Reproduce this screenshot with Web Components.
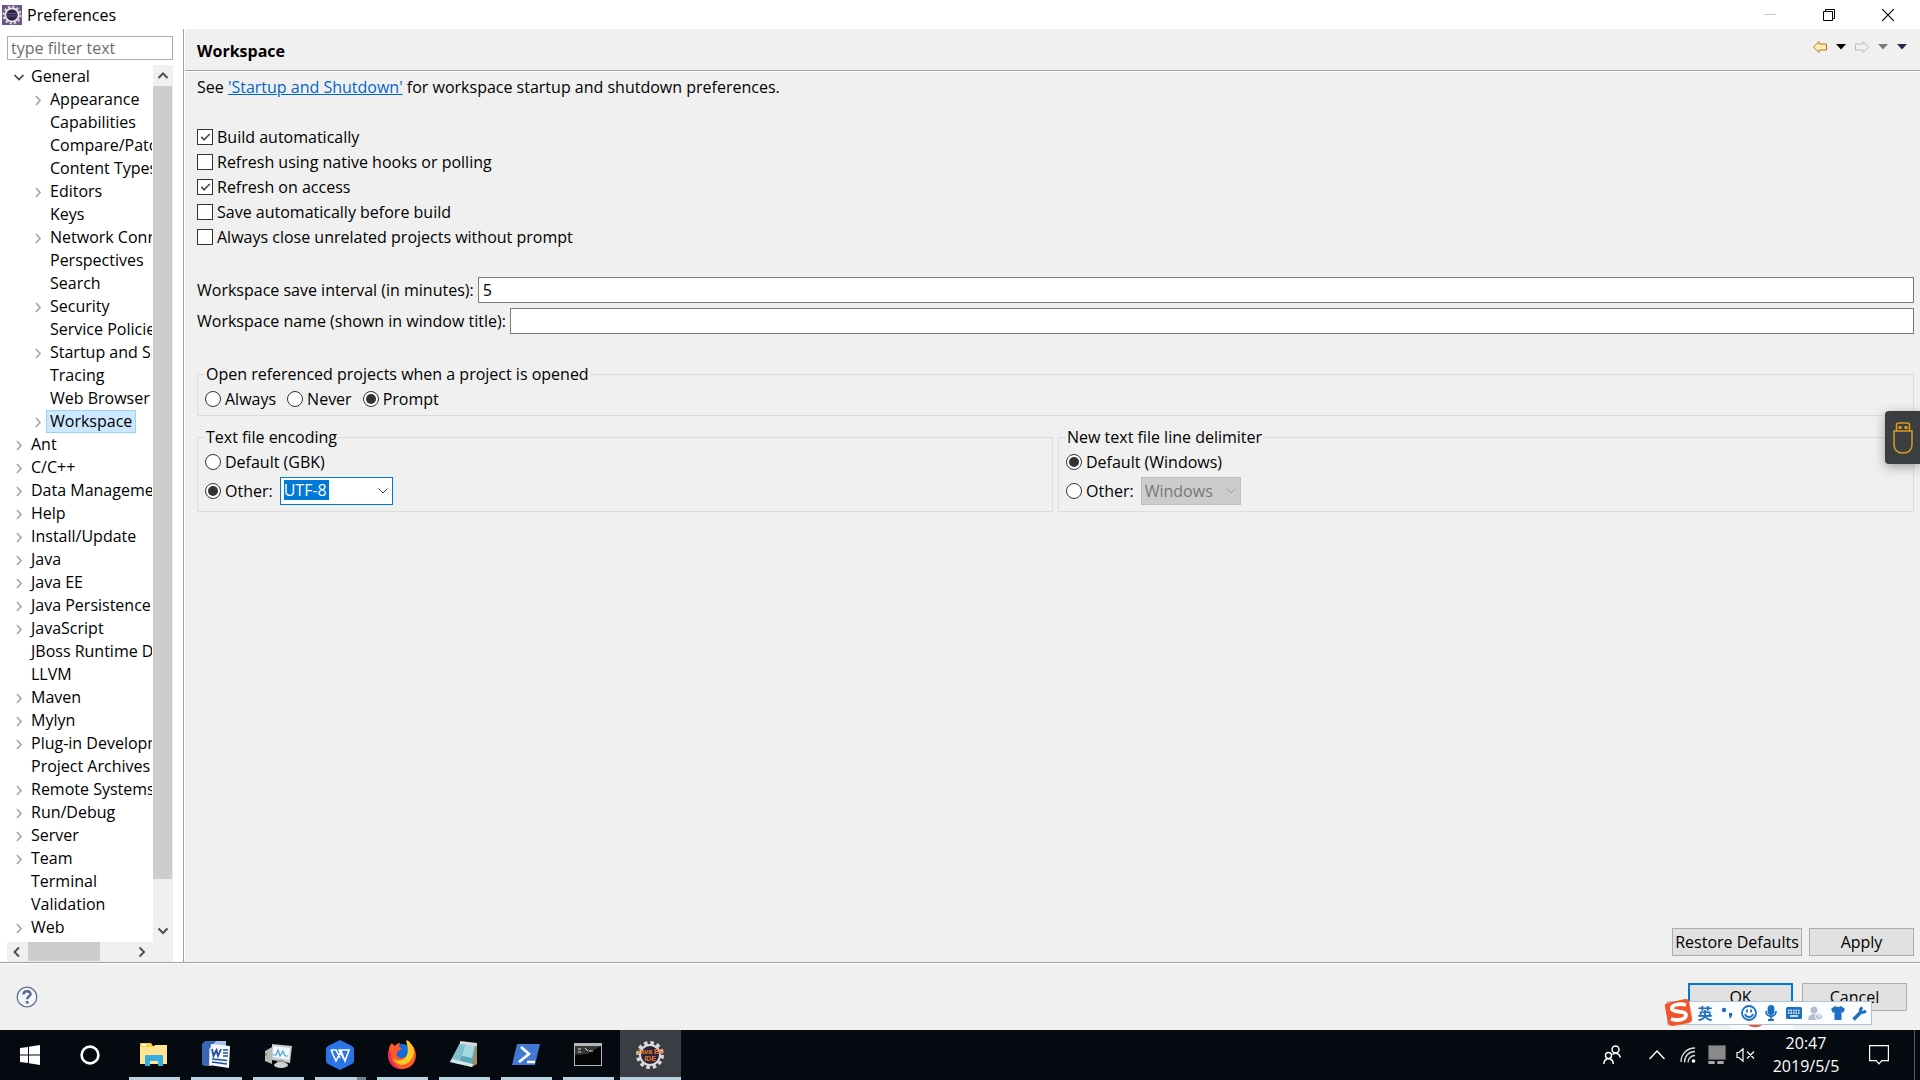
<!DOCTYPE html>
<html lang="en">
<head>
<meta charset="utf-8">
<title>Preferences</title>
<style>
  body {
    margin: 0;
    height: 100vh;
    display: flex;
    flex-direction: column;
    overflow: hidden;
    font-family: "Open Sans", "Noto Sans", "Noto Sans CJK SC", sans-serif;
    font-size: 16px;
    line-height: 20px;
    color: #000;
    background: #f0f0f0;
  }
  main { flex: 1; min-height: 0; display: flex; }
  a { color: #0066cc; }
</style>
</head>
<body>
<title-bar>Preferences</title-bar>
<main>
  <pref-sidebar></pref-sidebar>
  <pref-page heading="Workspace">
    <p>See <a href="#startup">'Startup and Shutdown'</a> for workspace startup and shutdown preferences.</p>
    <pref-stack>
      <pref-option type="checkbox" checked>Build automatically</pref-option>
      <pref-option type="checkbox">Refresh using native hooks or polling</pref-option>
      <pref-option type="checkbox" checked>Refresh on access</pref-option>
      <pref-option type="checkbox">Save automatically before build</pref-option>
      <pref-option type="checkbox">Always close unrelated projects without prompt</pref-option>
    </pref-stack>
    <pref-stack>
      <text-field label="Workspace save interval (in minutes):" value="5"></text-field>
      <text-field label="Workspace name (shown in window title):" value=""></text-field>
    </pref-stack>
    <pref-groups>
      <group-box label="Open referenced projects when a project is opened" wide>
        <option-row>
          <pref-option type="radio">Always</pref-option>
          <pref-option type="radio">Never</pref-option>
          <pref-option type="radio" checked>Prompt</pref-option>
        </option-row>
      </group-box>
      <group-box label="Text file encoding">
        <option-row><pref-option type="radio">Default (GBK)</pref-option></option-row>
        <option-row tall>
          <pref-option type="radio" checked>Other:</pref-option>
          <combo-box label="Text file encoding" value="UTF-8" active></combo-box>
        </option-row>
      </group-box>
      <group-box label="New text file line delimiter">
        <option-row><pref-option type="radio" checked>Default (Windows)</pref-option></option-row>
        <option-row tall>
          <pref-option type="radio">Other:</pref-option>
          <combo-box label="Line delimiter" value="Windows" disabled></combo-box>
        </option-row>
      </group-box>
    </pref-groups>
    <push-button slot="actions" wide>Restore Defaults</push-button>
    <push-button slot="actions">Apply</push-button>
  </pref-page>
</main>
<dialog-footer>
  <push-button primary>OK</push-button>
  <push-button>Cancel</push-button>
</dialog-footer>
<task-bar></task-bar>
<ime-bar></ime-bar>
<usb-tab></usb-tab>

<script>
  function define(name, render, setup) {
    if (customElements.get(name)) return;
    customElements.define(name, class extends HTMLElement {
      constructor() {
        super();
        this.attachShadow({ mode: 'open' });
      }
      connectedCallback() {
        this.shadowRoot.innerHTML = render(this);
        if (setup) setup(this, this.shadowRoot);
      }
    });
  }

  define('title-bar', () => `
    <style>
      :host { display: flex; align-items: center; height: 29px; padding: 0 3px 0 2px; background: #fff; }
      span { flex: 1; padding-left: 5px; }
      button { width: 59px; height: 29px; padding: 0; border: 0; background: none; }
      button svg { display: block; margin: auto; }
    </style>
    <svg width="20" height="20" viewBox="0 0 20 20">
      <rect width="20" height="20" fill="#6d5592"/>
      <circle cx="10" cy="10" r="8.5" fill="none" stroke="#d9d6d2" stroke-width="2" stroke-dasharray="2.4 2.05"/>
      <circle cx="10" cy="10" r="6.7" fill="#2d2548" stroke="#eeece6" stroke-width="1.8"/>
      <path d="M5 8.5h10M4.500 11h11" stroke="#5f5588"/>
    </svg>
    <span><slot></slot></span>
    <button aria-label="Minimize"><svg width="12" height="12" fill="none"><path d="M0 5.5h12" stroke="#c8c8c8"/></svg></button>
    <button aria-label="Restore"><svg width="12" height="12" fill="none" stroke="#000"><path d="M.5 2.500h9v9h-9zM2.500 2.500v-2h9v9h-2"/></svg></button>
    <button aria-label="Close"><svg width="12" height="12" fill="none" stroke="#000" stroke-width="1.200"><path d="M0 0l12 12M12 0L0 12"/></svg></button>
  `);

  // kind: 'x' closed, 'o' open, '-' leaf
  const TREE = [
    ['General', 'o'], ['Appearance', 'x', 1], ['Capabilities', '-', 1], ['Compare/Patch', '-', 1],
    ['Content Types', '-', 1], ['Editors', 'x', 1], ['Keys', '-', 1], ['Network Connections', 'x', 1],
    ['Perspectives', '-', 1], ['Search', '-', 1], ['Security', 'x', 1], ['Service Policies', '-', 1],
    ['Startup and Shutdown', 'x', 1], ['Tracing', '-', 1], ['Web Browser', '-', 1], ['Workspace', 'x', 1],
    ['Ant', 'x'], ['C/C++', 'x'], ['Data Management', 'x'], ['Help', 'x'], ['Install/Update', 'x'],
    ['Java', 'x'], ['Java EE', 'x'], ['Java Persistence', 'x'], ['JavaScript', 'x'],
    ['JBoss Runtime Detection', '-'], ['LLVM', '-'], ['Maven', 'x'], ['Mylyn', 'x'],
    ['Plug-in Development', 'x'], ['Project Archives', '-'], ['Remote Systems', 'x'], ['Run/Debug', 'x'],
    ['Server', 'x'], ['Team', 'x'], ['Terminal', '-'], ['Validation', '-'], ['Web', 'x']
  ];

  define('pref-sidebar', () => `
    <style>
      :host { display: flex; flex-direction: column; width: 183px; background: #fff; border-right: 1px solid #a0a0a0; }
      input { box-sizing: border-box; height: 24px; margin: 7px 10px 5px 7px; padding: 0 3px; border: 1px solid #abadb3; border-radius: 0; font: inherit; }
      input::placeholder { color: #6d6d6d; opacity: 1; }
      .tree { flex: 1; min-height: 0; display: grid; grid-template: minmax(0, 1fr) 20px / minmax(0, 1fr) 20px; margin: 0 10px 0 7px; }
      .items { overflow: hidden; margin-right: 1px; }
      .corner { background: #f0f0f0; }
    </style>
    <input type="text" placeholder="type filter text" aria-label="Filter">
    <div class="tree">
      <div class="items" role="tree">
        ${TREE.map(([text, kind, depth]) =>
          `<tree-item kind="${kind}" ${depth ? 'nested' : ''} ${text === 'Workspace' ? 'selected' : ''}>${text}</tree-item>`).join('')}
      </div>
      <scroll-bar></scroll-bar>
      <scroll-bar horizontal></scroll-bar>
      <div class="corner"></div>
    </div>
  `);

  define('tree-item', el => `
    <style>
      :host { display: flex; align-items: center; height: 23px; padding-left: 5px; white-space: nowrap; }
      :host([nested]) { padding-left: 24px; }
      svg { flex: none; width: 14px; height: 12px; margin-right: 1px; }
      span { box-sizing: border-box; height: 23px; padding: 0 3px; border: 1px solid transparent; line-height: 20px; }
      :host([selected]) span { background: #cce8ff; border-color: #99d1ff; }
    </style>
    <svg viewBox="0 0 14 12" fill="none">${{
      x: '<path d="M5 2l4 4.500L5 11" stroke="#a6a6a6" stroke-width="1.700"/>',
      o: '<path d="M2.500 4l4.500 4.500L11.500 4" stroke="#404040" stroke-width="1.700"/>',
      '-': ''
    }[el.getAttribute('kind')]}</svg>
    <span><slot></slot></span>
  `);

  define('scroll-bar', el => {
    const across = el.hasAttribute('horizontal');
    const arrow = d => `<svg width="12" height="12" viewBox="0 0 12 12" fill="none" stroke="#505050" stroke-width="2"><path d="${d}"/></svg>`;
    return `
      <style>
        :host { display: flex; flex-direction: column; background: #f0f0f0; }
        :host([horizontal]) { flex-direction: row; }
        button { flex: none; width: 19px; height: 21px; padding: 0; border: 0; background: none; }
        :host([horizontal]) button { width: 21px; height: 19px; }
        svg { display: block; margin: auto; }
        .track { flex: 1; display: flex; flex-direction: inherit; }
        .thumb { background: #cdcdcd; width: 19px; height: 95%; }
        :host([horizontal]) .thumb { width: 69%; height: 19px; }
      </style>
      <button aria-label="Back">${arrow(across ? 'M7 1.500L2.500 6 7 10.500' : 'M1.500 8L6 3.500 10.500 8')}</button>
      <div class="track"><div class="thumb"></div></div>
      <button aria-label="Forward">${arrow(across ? 'M2.500 1.500L7 6l-4.500 4.500' : 'M1.500 2.500L6 7l4.500-4.500')}</button>
    `;
  });

  define('pref-page', el => `
    <style>
      :host { flex: 1; min-width: 0; display: flex; flex-direction: column; border-left: 1px solid #fff; }
      header { display: flex; align-items: center; height: 41px; padding: 0 12px; border-bottom: 1px solid #a0a0a0; box-shadow: 0 1px #fff; }
      h1 { flex: 1; margin: 0; padding-top: 2px; font-size: 16px; line-height: 20px; font-weight: 700; }
      nav { align-self: flex-start; display: flex; align-items: center; gap: 8px; height: 36px; }
      nav button { display: block; padding: 0; border: 0; background: none; }
      nav svg { display: block; }
      section { flex: 1; padding: 6px 6px 0 12px; }
      footer { display: flex; justify-content: flex-end; gap: 7px; padding: 0 6px 6px; }
      ::slotted(p) { margin: 0 0 30px; }
    </style>
    <header>
      <h1>${el.getAttribute('heading')}</h1>
      <nav>
        <button aria-label="Back"><svg width="16" height="14" viewBox="0 0 16 14"><path d="M1.500 7L7 1.500V4h7.500v6H7v2.500z" fill="#fdedb0" stroke="#b87a1c" stroke-linejoin="round"/></svg></button>
        <button aria-label="Back history"><svg width="10" height="6"><path d="M0 0h10L5 5.500z" fill="#000"/></svg></button>
        <button aria-label="Forward"><svg width="16" height="14" viewBox="0 0 16 14"><path d="M14.500 7L9 1.500V4H1.500v6H9v2.500z" fill="#f0f0ec" stroke="#bcbcbc" stroke-linejoin="round"/></svg></button>
        <button aria-label="Forward history"><svg width="10" height="6"><path d="M0 0h10L5 5.500z" fill="#7c7c80"/></svg></button>
        <button aria-label="View menu"><svg width="12" height="6"><path d="M1 0h10L6 5.500z" fill="#2b2450"/></svg></button>
      </nav>
    </header>
    <section><slot></slot></section>
    <footer><slot name="actions"></slot></footer>
  `);

  define('pref-stack', () => `
    <style>:host { display: flex; flex-direction: column; gap: 5px; margin-bottom: 30px; }</style>
    <slot></slot>
  `);

  define('pref-option', el => `
    <style>
      :host { display: block; }
      label { display: flex; align-items: center; gap: 4px; width: fit-content; height: 20px; white-space: nowrap; }
      input { appearance: none; flex: none; box-sizing: border-box; display: grid; place-items: center; width: 16px; height: 16px; margin: 0; border: 1px solid #333; background: #fff; }
      input[type=radio] { border-radius: 50%; }
      input[type=radio]:checked::after { content: ""; width: 10px; height: 10px; border-radius: 50%; background: #333; }
      input[type=checkbox]:checked::after { content: ""; width: 9px; height: 4px; margin-bottom: 3px; border: solid #444; border-width: 0 0 2px 2px; transform: rotate(-45deg) scale(.8); }
    </style>
    <label><input type="${el.getAttribute('type')}" ${el.hasAttribute('checked') ? 'checked' : ''}><slot></slot></label>
  `);

  define('text-field', el => `
    <style>
      :host { display: flex; align-items: center; gap: 4px; }
      input { flex: 1; min-width: 0; box-sizing: border-box; height: 26px; padding: 0 4px; border: 1px solid #7a7a7a; font: inherit; }
    </style>
    <label for="field">${el.getAttribute('label')}</label>
    <input id="field" type="text" value="${el.getAttribute('value')}">
  `);

  define('pref-groups', () => `
    <style>:host { display: grid; grid-template-columns: 1fr 1fr; gap: 11px 5px; }</style>
    <slot></slot>
  `);

  define('group-box', el => `
    <style>
      :host { display: block; min-width: 0; }
      :host([wide]) { grid-column: 1 / -1; }
      fieldset { margin: 0; padding: 5px 7px 6px; border: 1px solid #dcdcdc; min-width: 0; }
      legend { padding: 0 1px; line-height: 20px; }
    </style>
    <fieldset><legend>${el.getAttribute('label')}</legend><slot></slot></fieldset>
  `, el => {
    // radios live in separate shadow roots, so the box keeps them exclusive
    const radios = [...el.querySelectorAll('pref-option')];
    el.addEventListener('click', e => {
      const hit = e.target.closest('pref-option');
      if (hit) radios.forEach(r => { r.shadowRoot.querySelector('input').checked = r === hit; });
    });
  });

  define('option-row', () => `
    <style>
      :host { display: flex; align-items: center; gap: 11px; }
      :host([tall]) { gap: 7px; margin-top: 5px; }
    </style>
    <slot></slot>
  `);

  define('combo-box', el => `
    <style>
      :host { display: grid; align-items: center; }
      select, svg { grid-area: 1 / 1; }
      select { appearance: none; box-sizing: border-box; width: 113px; height: 28px; padding: 0 3px; border: 1px solid #0078d7; border-radius: 0; background: #fff; color: #000; font: inherit; line-height: 20px; opacity: 1; }
      :host([active]) select { color: #fff; background: linear-gradient(#0078d7, #0078d7) 3px 2px / 45px 20px no-repeat #fff; padding-bottom: 2px; }
      select:disabled { width: 100px; border-color: #bfbfbf; background: #ccc; color: #787878; }
      svg { justify-self: end; margin-right: 5px; pointer-events: none; }
    </style>
    <select aria-label="${el.getAttribute('label')}" ${el.hasAttribute('disabled') ? 'disabled' : ''}><option>${el.getAttribute('value')}</option></select>
    <svg width="10" height="6" fill="none" stroke="${el.hasAttribute('disabled') ? '#a0a0a0' : '#444'}"><path d="M.5.5L5 5 9.500.5"/></svg>
  `);

  define('push-button', () => `
    <style>
      :host { display: block; }
      button { box-sizing: border-box; width: 105px; height: 28px; padding: 0; border: 1px solid #adadad; background: #e1e1e1; color: #000; font: inherit; white-space: nowrap; }
      :host([wide]) button { width: 130px; }
      :host([primary]) button { border: 2px solid #0078d7; }
    </style>
    <button type="button"><slot></slot></button>
  `);

  define('dialog-footer', () => `
    <style>
      :host { display: flex; align-items: center; gap: 9px; height: 67px; padding: 0 13px 0 16px; border-top: 1px solid #a0a0a0; box-shadow: inset 0 1px #fff; }
      .help { margin-right: auto; padding: 0; border: 0; background: none; }
      svg { display: block; }
    </style>
    <button class="help" aria-label="Help">
      <svg width="22" height="22" viewBox="0 0 22 22" fill="none" stroke="#5d6f8f">
        <circle cx="11" cy="11" r="9.800" fill="#f5f7fa" stroke-width="1.300"/>
        <path d="M7.500 8.500c0-4.500 7-4.200 7-.5 0 2.500-3.300 2.500-3.300 5.200" stroke-width="2.600"/>
        <path d="M11.200 15v2.600" stroke-width="2.800"/>
      </svg>
    </button>
    <slot></slot>
  `);

  const APPS = [
    ['File Explorer', '<path d="M1 4c0-1 .5-1 1-1h10l2 3h14v18H1z" fill="#fbd03c"/><path d="M1 7h13l2-2h12v19H1z" fill="#ffe593"/><path d="M3 4h4v2H3z" fill="#fff"/><path d="M6 26V17c0-2 .5-2 2-2h14c2 0 2 .5 2 2v9h-5v-5h-8v5z" fill="#37aee2"/>'],
    ['Word', '<path d="M1 25V8c0-5 2-7 6-7h18v5L10 26z" fill="#a9c4ec"/><path d="M1 25V8c0-5 2-7 6-7h8L8 9v17z" fill="#3a66b5"/><path d="M10 4l19 2-1 22-20-3z" fill="#f5f8fd"/><path d="M22 10h5M22 13h5M22 16h5M11 19l15 1.500M11 22l15 2" stroke="#254f9c" stroke-width="1.600"/><path d="M11 9l1.500 7L15.500 10l1.500 6 3-7" fill="none" stroke="#254f9c" stroke-width="1.800"/>'],
    ['Task Manager', '<path d="M2 11l7-4v17l-7-3z" fill="#b9b9b9"/><path d="M9 4l20 2-2 17-18-3z" fill="#ccc"/><path d="M10 6l17 2-1 12-16-3z" fill="#f0f8fd"/><path d="M10 15l3 0 2-5 2 6 3-5 2 5h3" fill="none" stroke="#4b9fc9" stroke-width="1.200"/><path d="M14 20h7v5h-7z" fill="#999"/><ellipse cx="18" cy="25" rx="7" ry="3" fill="#d2d2d2"/><path d="M3 13v3" stroke="#40b840" stroke-width="1.500"/>'],
    ['WPS Office', '<path d="M15 0l12 6q2 1 2 3v12q0 2-2 3l-12 6-12-6q-2-1-2-3V9q0-2 2-3z" fill="#2b74e8"/><path d="M6 10l5 11 5-10 4 10 4-11H14l5 9M6 10h5l4 8" fill="none" stroke="#fff" stroke-width="1.600"/>'],
    ['Firefox', '<circle cx="15" cy="16" r="12" fill="#1769d8"/><path d="M2 9c-3 10 2 20 13 20s16-10 13-19c-1-3-3-5-5-7 0-2-3-3-3-2 3 8 3 16-4 17-6 1-8-4-5-7l4-2-3-2c0-2 1-2 1-4-3 0-4 2-5 3-2-1-3-3-3-3-2 2-3 4-3 6z" fill="#ff5a27"/><path d="M19 1c3 8 3 17-5 19-3 1-6 0-8-2 3 7 11 9 16 4 6-5 7-14 1-19-1-2-3-3-4-2z" fill="#ffc928"/><path d="M2 9c-3 10 2 20 12 20C6 25 3 18 4 13z" fill="#f0265b"/>'],
    ['Notepad', '<path d="M25 4h3v20l-5 3z" fill="#a58b5c"/><path d="M11 3l16 2-4 22L1 22z" fill="#5ea6b3"/><path d="M12 3l14 2-3 13-14-3z" fill="#a6d8df"/><path d="M11 3L1 22l10-1 6-17z" fill="#83bfc8"/><path d="M11 1l17 2v3L11 4z" fill="#d6dadd"/><path d="M1 22l22 5 1-3-21-5z" fill="#d4e8ea"/>'],
    ['PowerShell', '<path d="M6 4h23l-5 21H1z" fill="#4377d1"/><path d="M10 7l8 7-10 8M16 22h8" fill="none" stroke="#fff" stroke-width="2.600"/>'],
    ['Command Prompt', '<path d="M1 3h28v23H1z" fill="#b5b5b5"/><path d="M2 6h26v19H2z" fill="#050505"/><path d="M2 6h26L14 14 2 15z" fill="#363636"/><path d="M5 9h3M5 12h3M12 8l3 3M16 11h4" stroke="#ddd"/>'],
    ['Eclipse', '<circle cx="15" cy="15" r="12" fill="none" stroke="#dadada" stroke-width="4" stroke-dasharray="3.500 2.780"/><circle cx="15" cy="15" r="10" fill="#29223d" stroke="#dadada" stroke-width="2"/><text x="15" y="14" font-size="7" font-weight="700" fill="#e87d1e" text-anchor="middle">Java EE</text><text x="15" y="21" font-size="7" font-weight="700" fill="#e87d1e" text-anchor="middle">IDE</text>']
  ];

  define('task-bar', () => `
    <style>
      :host { flex: none; display: flex; height: 50px; background: #050910; color: #fff; }
      button { padding: 0; border: 0; background: none; color: inherit; font: inherit; }
      svg { display: block; margin: auto; overflow: visible; }
      .start, .search { width: 60px; }
      .search { margin-right: 4px; }
      .apps { display: flex; flex: 1; }
      .tray { display: flex; align-items: center; }
      .clock { width: 92px; margin-right: 2px; line-height: 23px; }
      .notice { width: 50px; }
      .people { width: 58px; }
      .up { width: 32px; }
      .wifi, .net, .sound { width: 29px; }
      .desktop { align-self: stretch; width: 5px; margin-left: 10px; border-left: 1px solid #555b63; }
    </style>
    <button class="start" aria-label="Start"><svg width="20" height="20" viewBox="0 0 20 20" fill="#fff"><path d="M0 3l8-1v7.500H0zM9 1.800L20 0v9.500H9zM0 10.500h8V18l-8-1zM9 10.500h11V20L9 18.200z"/></svg></button>
    <button class="search" aria-label="Cortana"><svg width="20" height="20" fill="none" stroke="#fff" stroke-width="2.600"><circle cx="10" cy="10" r="8.400"/></svg></button>
    <div class="apps">
      ${APPS.map(([name, art]) => `<task-button name="${name}" ${name === 'Eclipse' ? 'active' : ''} ${name === 'WPS Office' ? 'stacked' : ''}>
        <svg width="30" height="30" viewBox="0 0 30 30">${art}</svg></task-button>`).join('')}
    </div>
    <div class="tray">
      <button class="people" aria-label="People"><svg width="18" height="20" viewBox="0 0 18 20" fill="none" stroke="#fff" stroke-width="1.500"><circle cx="12.500" cy="4.500" r="3.500"/><path d="M9.500 9.500c3-2.500 7-1 7.800 3"/><circle cx="5.500" cy="10.500" r="3"/><path d="M.8 19c.5-7 9-7 9.500 0"/></svg></button>
      <button class="up" aria-label="Show hidden icons"><svg width="16" height="10" fill="none" stroke="#fff" stroke-width="1.400"><path d="M.5 9L8 1l7.500 8"/></svg></button>
      <button class="wifi" aria-label="Wi-Fi"><svg width="16" height="16" viewBox="0 0 16 16" fill="none" stroke="#ddd" stroke-width="1.300"><path d="M1 15C1 7 7 1 15 1M4.500 15.500C4.500 9 9 4.500 15 4.500M8 15.500c0-4 3-7 7-7"/><circle cx="13.500" cy="14" r="1.800" fill="#fff" stroke="none"/></svg></button>
      <button class="net" aria-label="Network"><svg width="18" height="20"><path d="M.5.5h17v14H.5z" fill="#898989" stroke="#555"/><rect y="16" width="7" height="3" rx="1.500" fill="#aaa"/><rect x="9" y="16" width="7" height="3" rx="1.500" fill="#aaa"/></svg></button>
      <button class="sound" aria-label="Muted"><svg width="19" height="14" viewBox="0 0 19 14" fill="none" stroke="#fff" stroke-width="1.200"><path d="M1 4.500h2L7 .8v12.400L3 9.500H1zM11 3.500l7 7M18 3.500l-7 7"/></svg></button>
      <button class="clock">20:47<br>2019/5/5</button>
      <button class="notice" aria-label="Notifications"><svg width="20" height="20" viewBox="0 0 20 20" fill="none" stroke="#fff" stroke-width="1.200"><path d="M.6.6h18.800v15h-6.600L10 18.800 7.200 15.600H.6z"/></svg></button>
      <div class="desktop"></div>
    </div>
  `);

  define('task-button', el => `
    <style>
      :host { display: flex; width: 62px; }
      button { flex: 1; margin: 0 6px 0 5px; padding: 0 2px 0 0; border: 0; border-bottom: 3px solid #b8d2df; background: none; }
      :host([active]) button { margin: 0 1px 0 0; background: #3a3d43; }
      :host([stacked]) button { border-image: linear-gradient(90deg, #b8d2df 40px, #73838d 40px) 3; }
      ::slotted(svg) { display: block; margin: auto; padding-top: 2px; }
    </style>
    <button aria-label="${el.getAttribute('name')}"><slot></slot></button>
  `);

  define('ime-bar', () => `
    <style>
      :host { position: fixed; right: 48px; bottom: 55px; display: flex; align-items: center; box-sizing: border-box; width: 205px; height: 24px; padding: 0 0 0 26px; border: 1px solid #b3c1d4; background: #fbfdff; color: #1c6fc4; }
      button { flex: 1; padding: 0; border: 0; background: none; color: inherit; font: 700 15px/20px "Noto Sans CJK SC", sans-serif; }
      svg { display: block; margin: auto; }
      .logo { position: absolute; left: -4px; top: -4px; }
      .shade { position: absolute; right: 78px; top: 23px; width: 63px; height: 5px; background: #fbfbfb; }
    </style>
    <div class="shade"><svg width="63" height="5"><path d="M18 0h14c-3 3-10 3-14 0z" fill="#f1552b"/></svg></div>
    <svg class="logo" width="30" height="29" viewBox="0 0 30 29">
      <path d="M3 5L21 1q3-.5 4 2l3 17q.5 4-3 5L9 28q-4 .5-5-3L1 9q-.5-3 2-4z" fill="#f1552b"/>
      <path d="M22 7C15 5 7 7 8 11s14 1 14 6-9 6-15 4" fill="none" stroke="#fff" stroke-width="3.800"/>
    </svg>
    <button>英</button>
    <button aria-label="Punctuation"><svg width="12" height="14" fill="#1c6fc4"><circle cx="3" cy="4" r="2.200"/><path d="M8 7h3c1 3-1 5-3 6 1-2 1-3 0-3z"/></svg></button>
    <button aria-label="Emoji"><svg width="16" height="16" fill="none" stroke="#1c6fc4" stroke-width="1.800"><circle cx="8" cy="8" r="7"/><path d="M4 9c1 4 7 4 8 0M6 4.500v3M10 4.500v3"/></svg></button>
    <button aria-label="Voice"><svg width="12" height="16" fill="none" stroke="#1c6fc4" stroke-width="1.800"><rect x="3.500" y="1" width="5" height="8" rx="2.500" fill="#1c6fc4"/><path d="M1 6c0 7 10 7 10 0M6 11v4M3 15h6"/></svg></button>
    <button aria-label="Keyboard"><svg width="16" height="12"><rect width="16" height="12" rx="1.500" fill="#1c6fc4"/><path d="M2 3.500h12M2 6h12" stroke="#fff" stroke-width="1.500" stroke-dasharray="1.500 1"/><path d="M4 9h8" stroke="#fff" stroke-width="1.500"/></svg></button>
    <button aria-label="Account"><svg width="15" height="15" fill="#b3bfd3"><circle cx="6" cy="4" r="3.500"/><path d="M0 14c0-8 12-8 12 0z"/><circle cx="11" cy="10.500" r="3.500" stroke="#fff"/><path d="M9.500 9h3L11 12" fill="none" stroke="#fff"/></svg></button>
    <button aria-label="Skin"><svg width="14" height="14" fill="#1c6fc4"><path d="M4 0q3 2 6 0l4 3-2 4-1.500-1V14h-7V6L2 7 0 3z"/></svg></button>
    <button aria-label="Tools"><svg width="15" height="15" fill="none" stroke="#1c6fc4"><path d="M1.500 13.500l7-7" stroke-width="3.500"/><path d="M10.500 1.500c-4 2-2 7 3.500 3.500" stroke-width="3"/></svg></button>
  `);

  define('usb-tab', () => `
    <style>
      :host { position: fixed; right: 0; top: 411px; display: grid; place-items: center; width: 35px; height: 53px; border-radius: 4px 0 0 4px; background: #3b3e41; box-shadow: 0 3px 12px rgba(0, 0, 0, .35); }
    </style>
    <svg width="20" height="32" viewBox="0 0 20 32" fill="none" stroke="#dc9c1c" stroke-width="1.500">
      <path d="M3.500 9V3q0-2 2-2h9q2 0 2 2v6M1 9h18v13q0 9-9 9t-9-9z"/><path d="M5.500 5.500h3M11.500 5.500h3" stroke-width="3"/>
    </svg>
  `);
</script>
</body>
</html>
